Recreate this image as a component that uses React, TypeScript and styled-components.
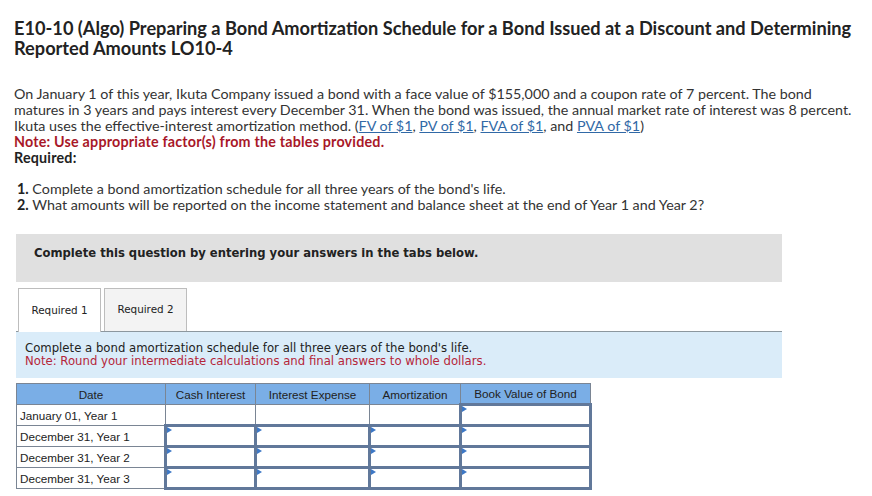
import styled, { createGlobalStyle } from "styled-components";

const GlobalStyle = createGlobalStyle`
    html, body {
        margin: 0;
        padding: 0;
        background: #ffffff;
    }
`;

const Page = styled.div`
    width: 872px;
    padding: 18px 0 0 14px;
    box-sizing: border-box;
    font-family: Lato, "Open Sans", sans-serif;
    color: #333333;
`;

const Title = styled.h1`
    margin: 0;
    font-size: 18.2px;
    line-height: 20px;
    font-weight: 700;
    color: #222222;
    white-space: nowrap;
`;

const Intro = styled.p`
    margin: 28px 0 0 0;
    font-size: 14.3px;
    line-height: 16px;
    white-space: nowrap;
`;

const Link = styled.a`
    color: #3169a6;
    text-decoration: underline;
`;

const Note = styled.span`
    display: block;
    color: #a81728;
    font-weight: 700;
    letter-spacing: 0.2px;
`;

const Required = styled.span`
    display: block;
    font-weight: 700;
    color: #222222;
    letter-spacing: 0.2px;
`;

const List = styled.ol`
    margin: 15px 0 0 0;
    padding: 0;
    list-style: none;
    font-size: 14.3px;
    line-height: 16px;
`;

const ListItem = styled.li`
    padding-left: 3px;

    b {
        color: #222222;
    }
`;

const Prompt = styled.div`
    margin: 21px 0 0 2px;
    width: 766px;
    height: 48px;
    background: #e0e0e0;
    box-sizing: border-box;
    padding: 12px 0 0 18px;
    font-family: "DejaVu Sans", Verdana, sans-serif;
    font-size: 11.6px;
    line-height: 14px;
    font-weight: 700;
    color: #222222;
`;

const Tabs = styled.div`
    margin: 6px 0 0 4px;
    display: flex;
    gap: 3px;
    height: 43px;
`;

const Tab = styled.div<{ $active?: boolean }>`
    width: 83px;
    box-sizing: border-box;
    border: 1px solid #bdbdbd;
    border-bottom: none;
    background: ${props => props.$active ? "#ffffff" : "#f3f3f3"};
    display: flex;
    align-items: center;
    justify-content: center;
    padding-bottom: 2px;
    font-family: "DejaVu Sans", Verdana, sans-serif;
    font-size: 10.4px;
    color: #222222;
    position: relative;
    z-index: ${props => props.$active ? 1 : 0};
    height: ${props => props.$active ? "44px" : "43px"};
`;

const Panel = styled.div`
    margin: 0 0 0 2px;
    width: 766px;
    height: 47px;
    box-sizing: border-box;
    background: #daecf9;
    border-top: 1px solid #8c979e;
    padding: 10px 0 0 9px;
    font-family: "DejaVu Sans", Verdana, sans-serif;
    font-size: 11.7px;
    line-height: 13px;
    color: #222222;
    white-space: nowrap;
`;

const PanelNote = styled.div`
    color: #b5263a;
`;

const Table = styled.table`
    margin: 5px 0 0 2px;
    border-collapse: collapse;
    font-family: "Liberation Sans", Arial, sans-serif;
    font-size: 11.7px;
    color: #222222;
`;

const Head = styled.th<{ $w: number }>`
    width: ${props => props.$w}px;
    height: 21px;
    box-sizing: border-box;
    background: #7aaee6;
    border: 1px solid #7a8594;
    font-weight: 400;
    padding: 0;
    text-align: center;
`;

const DateCell = styled.td`
    height: 20px;
    border: 1px solid #7a8594;
    padding: 0 0 0 3px;
    white-space: nowrap;
`;

const PlainCell = styled.td`
    border: 1px solid #7a8594;
    padding: 0;
`;

const InputCell = styled.td`
    border: 3px solid #61789a;
    padding: 0;
    position: relative;
    background: #ffffff;

    &::before {
        content: "";
        position: absolute;
        left: 0;
        top: 0;
        border-left: 5px solid #3d78c6;
        border-top: 3px solid transparent;
        border-bottom: 3px solid transparent;
    }
`;

const Field = styled.input`
    display: block;
    width: 100%;
    height: 14px;
    border: none;
    outline: none;
    background: transparent;
    box-sizing: border-box;
`;

const columns = [
    { label: "Date", w: 149 },
    { label: "Cash Interest", w: 90 },
    { label: "Interest Expense", w: 114 },
    { label: "Amortization", w: 91 },
    { label: "Book Value of Bond", w: 130 },
];

const rows = [
    { date: "January 01, Year 1", first: true },
    { date: "December 31, Year 1", first: false },
    { date: "December 31, Year 2", first: false },
    { date: "December 31, Year 3", first: false },
];

export default function App() {
    return (
        <>
            <GlobalStyle />
            <Page>
                <Title>
                    E10-10 (Algo) Preparing a Bond Amortization Schedule for a Bond Issued at a Discount and Determining
                    <br />
                    Reported Amounts LO10-4
                </Title>
                <Intro>
                    On January 1 of this year, Ikuta Company issued a bond with a face value of $155,000 and a coupon rate of 7 percent. The bond
                    <br />
                    matures in 3 years and pays interest every December 31. When the bond was issued, the annual market rate of interest was 8 percent.
                    <br />
                    Ikuta uses the effective-interest amortization method. (<Link href="#">FV of $1</Link>, <Link href="#">PV of $1</Link>, <Link href="#">FVA of $1</Link>, and <Link href="#">PVA of $1</Link>)
                    <Note>Note: Use appropriate factor(s) from the tables provided.</Note>
                    <Required>Required:</Required>
                </Intro>
                <List>
                    <ListItem><b>1.</b> Complete a bond amortization schedule for all three years of the bond's life.</ListItem>
                    <ListItem><b>2.</b> What amounts will be reported on the income statement and balance sheet at the end of Year 1 and Year 2?</ListItem>
                </List>
                <Prompt>Complete this question by entering your answers in the tabs below.</Prompt>
                <Tabs>
                    <Tab $active>Required 1</Tab>
                    <Tab>Required 2</Tab>
                </Tabs>
                <Panel>
                    Complete a bond amortization schedule for all three years of the bond's life.
                    <PanelNote>Note: Round your intermediate calculations and final answers to whole dollars.</PanelNote>
                </Panel>
                <Table>
                    <thead>
                        <tr>
                            {columns.map(c => (
                                <Head key={c.label} $w={c.w}>{c.label}</Head>
                            ))}
                        </tr>
                    </thead>
                    <tbody>
                        {rows.map(r => (
                            <tr key={r.date}>
                                <DateCell>{r.date}</DateCell>
                                {r.first ? (
                                    <>
                                        <PlainCell />
                                        <PlainCell />
                                        <PlainCell />
                                    </>
                                ) : (
                                    <>
                                        <InputCell><Field /></InputCell>
                                        <InputCell><Field /></InputCell>
                                        <InputCell><Field /></InputCell>
                                    </>
                                )}
                                <InputCell><Field /></InputCell>
                            </tr>
                        ))}
                    </tbody>
                </Table>
            </Page>
        </>
    );
}
